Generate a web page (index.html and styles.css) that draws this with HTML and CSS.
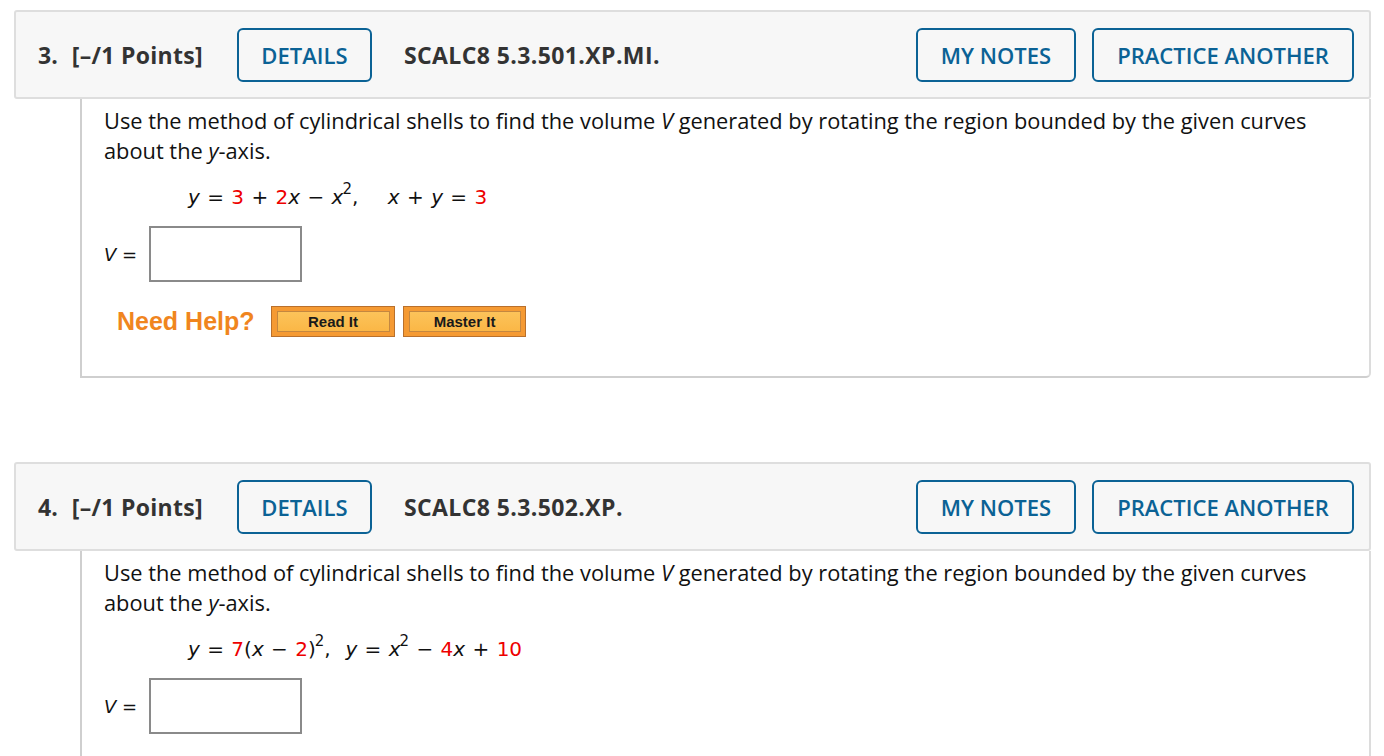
FILE: index.html
```html
<!DOCTYPE html>
<html>
<head>
<meta charset="utf-8">
<link rel="stylesheet" href="styles.css">
</head>
<body>
<div class="page">
  <section class="question">
    <header class="qhead">
      <span class="qnum">3.</span>
      <span class="qpts">[–/1 Points]</span>
      <button class="obtn details">DETAILS</button>
      <span class="qcode">SCALC8 5.3.501.XP.MI.</span>
      <span class="spacer"></span>
      <button class="obtn notes">MY NOTES</button>
      <button class="obtn practice">PRACTICE ANOTHER</button>
    </header>
    <div class="qbody">
      <p class="prompt">Use the method of cylindrical shells to find the volume <i>V</i> generated by rotating the region bounded by the given curves about the <i>y</i>-axis.</p>
      <p class="math"><i>y</i> = <span class="r">3</span> + <span class="r">2</span><i>x</i> − <i>x</i><sup>2</sup>,&nbsp;&nbsp;&nbsp; <i>x</i> + <i>y</i> = <span class="r">3</span></p>
      <div class="answer"><span class="vlabel"><i>V</i> =</span><span class="ibox"></span></div>
      <div class="help">
        <span class="needhelp">Need Help?</span>
        <span class="hbtn read"><span class="hin">Read It</span></span>
        <span class="hbtn master"><span class="hin">Master It</span></span>
      </div>
    </div>
  </section>

  <section class="question">
    <header class="qhead">
      <span class="qnum">4.</span>
      <span class="qpts">[–/1 Points]</span>
      <button class="obtn details">DETAILS</button>
      <span class="qcode">SCALC8 5.3.502.XP.</span>
      <span class="spacer"></span>
      <button class="obtn notes">MY NOTES</button>
      <button class="obtn practice">PRACTICE ANOTHER</button>
    </header>
    <div class="qbody">
      <p class="prompt">Use the method of cylindrical shells to find the volume <i>V</i> generated by rotating the region bounded by the given curves about the <i>y</i>-axis.</p>
      <p class="math"><i>y</i> = <span class="r">7</span>(<i>x</i> − <span class="r">2</span>)<sup>2</sup>,&nbsp; <i>y</i> = <i>x</i><sup>2</sup> − <span class="r">4</span><i>x</i> + <span class="r">10</span></p>
      <div class="answer"><span class="vlabel"><i>V</i> =</span><span class="ibox"></span></div>
      <div class="help">
        <span class="needhelp">Need Help?</span>
        <span class="hbtn read"><span class="hin">Read It</span></span>
        <span class="hbtn master"><span class="hin">Master It</span></span>
      </div>
    </div>
  </section>
</div>
</body>
</html>
```

FILE: styles.css
```css
* { box-sizing: border-box; }
html, body { margin: 0; padding: 0; background: #fff; }
body { font-family: "Open Sans", "DejaVu Sans", sans-serif; color: #222; }
.page { padding: 10px 13px 0 14px; width: 1384px; }
.question { margin-bottom: 84px; }
.qhead {
  height: 89px;
  background: #f7f7f7;
  border: 2px solid #dedede;
  border-radius: 3px;
  display: flex;
  align-items: center;
  padding: 0 15px 0 22px;
  font-size: 23px;
  font-weight: 700;
  color: #333;
}
.qnum { margin-right: 14px; }
.qpts { margin-right: 34px; letter-spacing: 0.3px; }
.qcode { margin-left: 32px; letter-spacing: 0.4px; }
.spacer { flex: 1; }
.obtn {
  height: 54px;
  border: 2px solid #0b6295;
  border-radius: 6px;
  background: transparent;
  color: #0b6295;
  font-family: "Open Sans", sans-serif;
  font-size: 22px;
  font-weight: 600;
  padding: 0;
  cursor: pointer;
}
.details { width: 135px; }
.notes { width: 160px; margin-right: 16px; }
.practice { width: 262px; }
.qbody {
  margin-left: 66px;
  border-left: 2px solid #cfcfcf;
  border-right: 2px solid #dcdcdc;
  border-bottom: 2px solid #cfcfcf;
  border-bottom-right-radius: 5px;
  padding: 7px 40px 39px 22px;
}
.prompt {
  margin: 0;
  font-size: 21.8px;
  line-height: 30px;
  color: #111;
}
.math {
  margin: 16px 0 0 84px;
  font-family: "DejaVu Sans", Verdana, sans-serif;
  font-size: 20px;
  line-height: 30px;
  color: #111;
  word-spacing: 1px;
}
.math sup { font-size: 15px; line-height: 0; vertical-align: 10px; margin-left: -1px; }
.r { color: #ee0000; }
.answer {
  margin-top: 14px;
  display: flex;
  align-items: center;
  font-family: "DejaVu Sans", Verdana, sans-serif;
  font-size: 18px;
  color: #111;
}
.vlabel { width: 45px; }
.ibox {
  width: 153px;
  height: 56px;
  border: 2px solid #8a8a8a;
  background: #fff;
}
.help {
  margin-top: 24px;
  display: flex;
  align-items: center;
  padding-left: 13px;
}
.needhelp {
  font-family: "Liberation Sans", Arial, sans-serif;
  font-weight: bold;
  font-size: 25px;
  color: #f0851e;
  margin-right: 16px;
}
.hbtn {
  height: 31px;
  border: 1px solid #b9702c;
  background: #f59a33;
  padding: 4px 4px 4px 5px;
  display: flex;
  margin-right: 8px;
}
.read { width: 124px; }
.master { width: 123px; }
.hin {
  flex: 1;
  border: 1px solid #c48740;
  background: linear-gradient(#fcc35a, #fbb746);
  font-family: "Liberation Sans", Arial, sans-serif;
  font-weight: bold;
  font-size: 15px;
  color: #1a1a1a;
  display: flex;
  align-items: center;
  justify-content: center;
}
```
